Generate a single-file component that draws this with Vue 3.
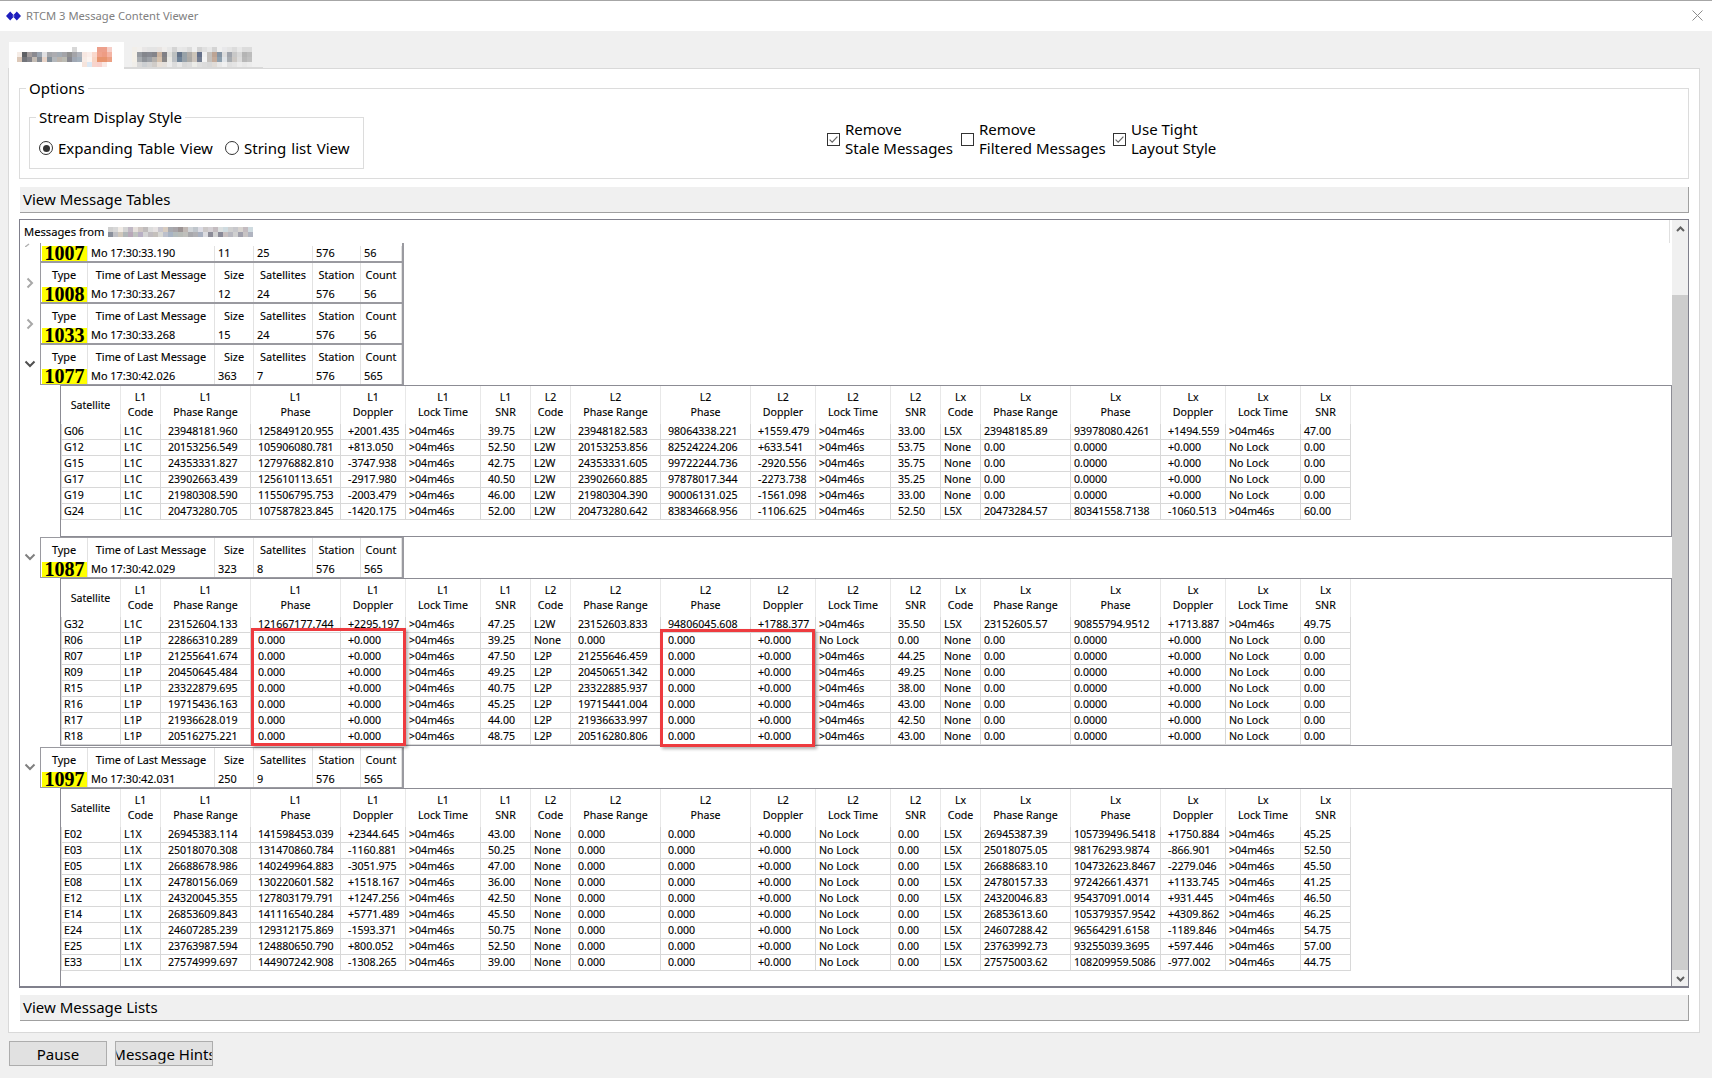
<script setup>
const split = (s) => s.split(' ').map((v) => v.replace('_', ' '))
const NL = 'No_Lock', T = '>04m46s'

const cols = [
  ['Satellite'], ['L1', 'Code'], ['L1', 'Phase Range'], ['L1', 'Phase'], ['L1', 'Doppler'], ['L1', 'Lock Time'], ['L1', 'SNR'],
  ['L2', 'Code'], ['L2', 'Phase Range'], ['L2', 'Phase'], ['L2', 'Doppler'], ['L2', 'Lock Time'], ['L2', 'SNR'],
  ['Lx', 'Code'], ['Lx', 'Phase Range'], ['Lx', 'Phase'], ['Lx', 'Doppler'], ['Lx', 'Lock Time'], ['Lx', 'SNR'],
]
// columns whose values carry the wider left inset
const wide = new Set([2, 3, 4, 6, 8, 9, 10, 12, 16])
const noLx = `None 0.00 0.0000 +0.000 ${NL} 0.00`
const noL2 = `None 0.000 0.000 +0.000 ${NL} 0.00`

const t1077 = [
  `G06 L1C 23948181.960 125849120.955 +2001.435 ${T} 39.75 L2W 23948182.583 98064338.221 +1559.479 ${T} 33.00 L5X 23948185.89 93978080.4261 +1494.559 ${T} 47.00`,
  `G12 L1C 20153256.549 105906080.781 +813.050 ${T} 52.50 L2W 20153253.856 82524224.206 +633.541 ${T} 53.75 ${noLx}`,
  `G15 L1C 24353331.827 127976882.810 -3747.938 ${T} 42.75 L2W 24353331.605 99722244.736 -2920.556 ${T} 35.75 ${noLx}`,
  `G17 L1C 23902663.439 125610113.651 -2917.980 ${T} 40.50 L2W 23902660.885 97878017.344 -2273.738 ${T} 35.25 ${noLx}`,
  `G19 L1C 21980308.590 115506795.753 -2003.479 ${T} 46.00 L2W 21980304.390 90006131.025 -1561.098 ${T} 33.00 ${noLx}`,
  `G24 L1C 20473280.705 107587823.845 -1420.175 ${T} 52.00 L2W 20473280.642 83834668.956 -1106.625 ${T} 52.50 L5X 20473284.57 80341558.7138 -1060.513 ${T} 60.00`,
]
const glo = (id, pr, snr, l2pr, l2snr) =>
  `${id} L1P ${pr} 0.000 +0.000 ${T} ${snr} L2P ${l2pr} 0.000 +0.000 ${T} ${l2snr} ${noLx}`
const t1087 = [
  `G32 L1C 23152604.133 121667177.744 +2295.197 ${T} 47.25 L2W 23152603.833 94806045.608 +1788.377 ${T} 35.50 L5X 23152605.57 90855794.9512 +1713.887 ${T} 49.75`,
  `R06 L1P 22866310.289 0.000 +0.000 ${T} 39.25 ${noL2} ${noLx}`,
  glo('R07', '21255641.674', '47.50', '21255646.459', '44.25'),
  glo('R09', '20450645.484', '49.25', '20450651.342', '49.25'),
  glo('R15', '23322879.695', '40.75', '23322885.937', '38.00'),
  glo('R16', '19715436.163', '45.25', '19715441.004', '43.00'),
  glo('R17', '21936628.019', '44.00', '21936633.997', '42.50'),
  glo('R18', '20516275.221', '48.75', '20516280.806', '43.00'),
]
const gal = (id, pr, ph, d, snr, xpr, xph, xd, xsnr) =>
  `${id} L1X ${pr} ${ph} ${d} ${T} ${snr} ${noL2} L5X ${xpr} ${xph} ${xd} ${T} ${xsnr}`
const t1097 = [
  gal('E02', '26945383.114', '141598453.039', '+2344.645', '43.00', '26945387.39', '105739496.5418', '+1750.884', '45.25'),
  gal('E03', '25018070.308', '131470860.784', '-1160.881', '50.25', '25018075.05', '98176293.9874', '-866.901', '52.50'),
  gal('E05', '26688678.986', '140249964.883', '-3051.975', '47.00', '26688683.10', '104732623.8467', '-2279.046', '45.50'),
  gal('E08', '24780156.069', '130220601.582', '+1518.167', '36.00', '24780157.33', '97242661.4371', '+1133.745', '41.25'),
  gal('E12', '24320045.355', '127803179.791', '+1247.256', '42.50', '24320046.83', '95437091.0014', '+931.445', '46.50'),
  gal('E14', '26853609.843', '141116540.284', '+5771.489', '45.50', '26853613.60', '105379357.9542', '+4309.862', '46.25'),
  gal('E24', '24607285.239', '129312175.869', '-1593.371', '50.75', '24607288.42', '96564291.6158', '-1189.846', '54.75'),
  gal('E25', '23763987.594', '124880650.790', '+800.052', '52.50', '23763992.73', '93255039.3695', '+597.446', '57.00'),
  gal('E33', '27574999.697', '144907242.908', '-1308.265', '39.00', '27575003.62', '108209959.5086', '-977.002', '44.75'),
]

const heads = ['Type', 'Time of Last Message', 'Size', 'Satellites', 'Station', 'Count']
const messages = [
  { id: '1008', time: 'Mo 17:30:33.267', size: 12, sats: 24, st: 576, count: 56, open: false },
  { id: '1033', time: 'Mo 17:30:33.268', size: 15, sats: 24, st: 576, count: 56, open: false },
  { id: '1077', time: 'Mo 17:30:42.026', size: 363, sats: 7, st: 576, count: 565, open: true, dark: true, rows: t1077.map(split), cls: 'pad' },
  { id: '1087', time: 'Mo 17:30:42.029', size: 323, sats: 8, st: 576, count: 565, open: true, rows: t1087.map(split), cls: 'tight', marks: true },
  { id: '1097', time: 'Mo 17:30:42.031', size: 250, sats: 9, st: 576, count: 565, open: true, rows: t1097.map(split), cls: 'pad' },
]

const m = (s) => s.trim().split(/\s+/).map((c) => (c === '-' ? 'transparent' : '#' + c))
const mosaicA = [
  m('- - - - - - - - - - - d8d8d8 - - - - eda08c eda08c f6cfc8'),
  m('f5ece6 5e6064 a39c9c 8a8a90 9aa4b0 e0e0e2 a4a6aa acacb0 a4acb4 a4a4a8 909090 a4a4a8 b0b4bc f8e8e2 fbeeea fad8cc f0a28c ee9c84 f4b4a4'),
  m('dcc8b8 72747a 84848a c4bcb4 868c94 e8d4c8 84909a b4b8bc bcb4ac bcbcb4 888890 a0a8b4 a4b0bc f8ecE6 fdf4f0 f8d4c4 e8946e e8946e eca084'),
  m('- - - - - - - - - - - - - f6e4dc dce8f4 f8d4cc f8d0cc fae8e4 -'),
]
const mosaicB = [
  m('f2efea f2f0ee e8e6e6 e4e4e4 e4e4e4 e8e4e2 f0eeec e8e8e8 d4d4d4 e8e8e8 e6e6e6 dcdcdc f0f0f0 d4d4d4 e0e0e0 e8e8e8 d4d4d4 f0f0f0 e8e8ea e4e4e4 dcdcdc e8e8e8 dcdcdc dcdcdc'),
  m('f4f0e8 969aa0 84868c 888a92 84848a ccb4a0 808086 e0e0dc bcc0c0 64748a 98a2a8 b0aca8 ccc4b8 64708a f0f0f0 c4c0bc bca494 8494a4 dcdcdc a0a4ac c8c8c8 d8d8d8 b4b4b4 bcbcbc'),
  m('f4f0e8 a8acb0 90949a 9ca0a6 b4b0ac d4c0ac 888686 e8e8e4 bcc0c4 708498 98a2aa acaaa6 ccc4bc 747e90 f4f4f4 c4c0bc c4ac9c 8ea0ae e0e4e8 a8acb0 ccc8c4 dcdcdc b8b8b8 c0c0c0'),
  m('f0eeea d8d8d8 cccfd2 d4d4d4 d0ccc8 e8e0d8 e4e0dc ececec dcdcdc e8e8e8 d8d8d8 dcdcdc ecece8 e0e0e0 dcdcdc d8d8d8 e0dcd8 e8e8e8 f0f0f0 e0e0e0 e4e4e4 ececec e8e8e8 ececec'),
]
const mosaicC = [
  m('d0d0d0 d8d8d8 f0ebe6 d4d4d4 c0b8c4 e6e0dc d0c8c4 c0bcbc dcdcdc e6e2e2 c8c6ce d8ccc0 a8aab0 a8a4a8 9c9494 c0b8b4 d0d4d8 c0c6cc dcdce4 ccc8c8 d4d0d4 c4bcc0 dce0e0 cfdbe0 d0d0d0 c8c8cc d8d4d0 c4bcc0 cfdbe0'),
  m('8a909c c0c0c4 d0c8bc b0b6b8 b8a8b8 c0c4c0 b8b0c4 d4d4d4 c0bcc0 c4c0bc d8d8d4 bcc0cc a8b4c4 b4bcbc b8bcb8 c0c0bc a8a8ac b0b0b4 a8b0c0 dcdce0 8c8c98 d0d0d0 8a8a98 c8c0c0 b8b8c0 d0d0d0 a0a0ac c8c4c4 b0b4c0'),
]
</script>

<template>
  <div class="window">
    <header class="titlebar">
      <svg class="logo" width="15" height="10" viewBox="0 0 15 10">
        <path d="M0 5 4.2 .5 7.5 4 10.8 .5 15 5 10.8 9.5 7.5 6 4.2 9.5Z" fill="#1e1ebe" />
        <circle cx="7.5" cy="5" r="1" fill="#9090e0" />
      </svg>
      <span class="title">RTCM 3 Message Content Viewer</span>
      <svg class="close" width="11" height="11" viewBox="0 0 11 11">
        <path d="M.5.5 10.5 10.5M10.5.5.5 10.5" stroke="#8c8c8c" fill="none" />
      </svg>
    </header>

    <nav class="tabs">
      <div class="tab active">
        <div class="mosaic mosaic-a">
          <div v-for="(row, r) in mosaicA" :key="r" class="mrow">
            <i v-for="(c, i) in row" :key="i" :style="{ background: c }"></i>
          </div>
        </div>
      </div>
      <div class="tab inactive">
        <div class="mosaic mosaic-b">
          <div v-for="(row, r) in mosaicB" :key="r" class="mrow">
            <i v-for="(c, i) in row" :key="i" :style="{ background: c }"></i>
          </div>
        </div>
      </div>
    </nav>

    <main class="pane">
      <section class="group options">
        <span class="legend">Options</span>
        <div class="group stream">
          <span class="legend">Stream Display Style</span>
          <div class="radio-row">
            <span class="radio on"></span><span class="radio-label first">Expanding Table View</span>
            <span class="radio"></span><span class="radio-label">String list View</span>
          </div>
        </div>
        <label class="check c1">
          <svg class="box" width="13" height="13" viewBox="0 0 13 13">
            <rect x=".5" y=".5" width="12" height="12" fill="#fff" stroke="#333" />
            <path d="M2.6 6.6 5.2 9.2 10.4 3.6" fill="none" stroke="#666" stroke-width="1.2" />
          </svg>
          <span>Remove<br />Stale Messages</span>
        </label>
        <label class="check c2">
          <svg class="box" width="13" height="13" viewBox="0 0 13 13">
            <rect x=".5" y=".5" width="12" height="12" fill="#fff" stroke="#333" />
          </svg>
          <span>Remove<br />Filtered Messages</span>
        </label>
        <label class="check">
          <svg class="box" width="13" height="13" viewBox="0 0 13 13">
            <rect x=".5" y=".5" width="12" height="12" fill="#fff" stroke="#333" />
            <path d="M2.6 6.6 5.2 9.2 10.4 3.6" fill="none" stroke="#666" stroke-width="1.2" />
          </svg>
          <span>Use Tight<br />Layout Style</span>
        </label>
      </section>

      <div class="bar first-bar">View Message Tables</div>

      <section class="viewport">
        <div class="content">
          <div class="from">
            <span class="from-label">Messages from</span>
            <div class="mosaic mosaic-c">
              <div v-for="(row, r) in mosaicC" :key="r" class="mrow">
                <i v-for="(c, i) in row" :key="i" :style="{ background: c }"></i>
              </div>
            </div>
          </div>

          <div class="msg partial">
            <div class="gutter top">
              <svg width="6" height="4" viewBox="0 0 6 4"><path d="M0 4 4 1" stroke="#b0b0b0" stroke-width="1.4" /></svg>
            </div>
            <div class="sum clipped">
              <div class="id cell"><b>1007</b></div>
              <div class="cell">Mo 17:30:33.190</div>
              <div class="cell">11</div>
              <div class="cell">25</div>
              <div class="cell">576</div>
              <div class="cell">56</div>
            </div>
          </div>

          <template v-for="msg in messages" :key="msg.id">
            <div class="msg">
              <div class="gutter">
                <svg v-if="!msg.open" width="8" height="12" viewBox="0 0 8 12">
                  <path d="M1.5 1.5 6 6 1.5 10.5" fill="none" stroke="#a8a8a8" stroke-width="2" />
                </svg>
                <svg v-else class="down-chev" width="12" height="8" viewBox="0 0 12 8">
                  <path d="M1.5 1.5 6 6 10.5 1.5" fill="none" :stroke="msg.dark ? '#505050' : '#808080'" stroke-width="2" />
                </svg>
              </div>
              <div class="sum">
                <div v-for="h in heads" :key="h" class="head">{{ h }}</div>
                <div class="id cell"><b>{{ msg.id }}</b></div>
                <div class="cell">{{ msg.time }}</div>
                <div class="cell">{{ msg.size }}</div>
                <div class="cell">{{ msg.sats }}</div>
                <div class="cell">{{ msg.st }}</div>
                <div class="cell">{{ msg.count }}</div>
              </div>
            </div>
            <div v-if="msg.open" class="detail" :class="msg.cls">
              <div class="grid">
                <div v-for="(c, i) in cols" :key="i" class="th"><span v-for="l in c" :key="l">{{ l }}</span></div>
                <template v-for="row in msg.rows" :key="row[0]">
                  <div v-for="(v, i) in row" :key="i" class="td" :class="{ wide: wide.has(i), firstcol: i === 0 }">{{ v }}</div>
                </template>
              </div>
              <template v-if="msg.marks">
                <div class="mark m1"></div>
                <div class="mark m2"></div>
              </template>
            </div>
          </template>
        </div>
        <aside class="scrollbar">
          <svg class="arrow" width="9" height="6" viewBox="0 0 9 6"><path d="M1 5 4.5 1.5 8 5" fill="none" stroke="#606060" stroke-width="2" /></svg>
          <div class="thumb"></div>
          <svg class="arrow down" width="9" height="6" viewBox="0 0 9 6"><path d="M1 1 4.5 4.5 8 1" fill="none" stroke="#606060" stroke-width="2" /></svg>
        </aside>
      </section>

      <div class="bar last-bar">View Message Lists</div>
    </main>

    <footer class="actions">
      <button class="btn">Pause</button>
      <button class="btn clip"><span>Message Hints</span></button>
    </footer>
  </div>
</template>

<style>
html, body { margin: 0; background: #f0f0f0; }
</style>

<style scoped>
* { box-sizing: border-box; }
.window {
  width: 1712px;
  height: 1078px;
  background: #f0f0f0;
  font-family: "Noto Sans", "Liberation Sans", sans-serif;
  color: #000;
  overflow: hidden;
}
.titlebar {
  height: 31px;
  background: #fff;
  border-top: 1px solid #a6a6a6;
  display: flex;
  align-items: center;
  padding: 0 9px 1px 6px;
}
.logo { margin-right: 5px; }
.title { font-size: 11.2px; color: #808080; flex: 1; }
.tabs { display: flex; height: 37px; padding: 11px 0 0 9px; }
.tab { height: 26px; position: relative; }
.tab.active { width: 115px; background: #fff; z-index: 1; height: 27px; }
.tab.inactive { width: 139px; background: #f0f0f0; border-bottom: 1px solid #d9d9d9; margin-top: 1px; height: 25px; }
.mosaic { position: absolute; display: flex; flex-direction: column; }
.mrow { display: flex; height: 5px; }
.mrow i { display: block; width: 5px; height: 5px; flex: none; }
.mosaic-a { left: 8px; top: 5px; }
.mosaic-b { left: 8px; top: 4px; }
.mosaic-c { position: static; }

.pane {
  margin-left: 8px;
  width: 1692px;
  height: 965px;
  background: #fff;
  border: 1px solid #d9d9d9;
  padding: 19px 0 0 10px;
}
.group { position: relative; border: 1px solid #dcdcdc; }
.legend {
  position: absolute;
  top: -12px;
  left: 6px;
  padding: 0 3px;
  background: #fff;
  font-size: 15px;
  line-height: 22px;
}
.options {
  width: 1670px;
  height: 91px;
  display: flex;
  align-items: flex-start;
  padding: 28px 0 0 9px;
}
.stream { width: 335px; height: 52px; }
.radio-row { display: flex; align-items: center; height: 22px; margin-top: 19px; padding-left: 9px; font-size: 15px; }
.radio { width: 14px; height: 14px; border: 1px solid #333; border-radius: 50%; background: #fff; position: relative; flex: none; }
.radio.on::after { content: ""; position: absolute; inset: 2.5px; border-radius: 50%; background: #333; }
.radio-label { margin-left: 5px; white-space: nowrap; word-spacing: 1.2px; }
.radio-label.first { width: 167px; }
.check { display: flex; align-items: center; width: 134px; font-size: 15px; line-height: 19px; margin-top: 3px; white-space: nowrap; }
.c1 { margin-left: 463px; }
.c2 { width: 152px; }
.box { margin-right: 5px; flex: none; }

.bar {
  height: 26px;
  margin-left: 1px;
  width: 1669px;
  background: #f0f0f0;
  border-right: 1px solid #a0a0a0;
  border-bottom: 1px solid #a0a0a0;
  padding-left: 3px;
  font-size: 15px;
  line-height: 25px;
}
.first-bar { margin-top: 8px; }
.last-bar { margin-top: 7px; }

.viewport {
  margin-top: 6px;
  width: 1670px;
  height: 769px;
  display: flex;
  border: 1px solid #80808c;
  border-bottom-width: 2px;
  overflow: hidden;
}
.content {
  width: 1652px;
  flex: none;
  overflow: hidden;
  font-size: 10.6px;
  -webkit-text-stroke: 0.12px #000;
}
.from {
  height: 23px;
  display: flex;
  align-items: center;
  padding-left: 4px;
  font-size: 11.2px;
  border-right: 1px solid #e0e0e0;
  margin-right: 2px;
}
.from-label { width: 84px; flex: none; white-space: nowrap; }
.msg { display: flex; align-items: stretch; }
.gutter { width: 20px; flex: none; display: flex; align-items: center; justify-content: center; }
.gutter.top { align-items: flex-start; padding-right: 4px; }
.down-chev { margin-bottom: 2px; }
.sum {
  width: 364px;
  height: 41px;
  display: grid;
  grid-template-columns: 47px 127px 39px 59px 48px 41px;
  grid-template-rows: 24px 15px;
  border: 1px solid #9a9aa0;
  border-right-width: 2px;
  background: #fff;
  font-size: 10.9px;
}
.clipped { height: 19px; grid-template-rows: 15px; border-top: 0; padding-top: 3px; }
.head, .cell { border-right: 1px solid #e2e2e2; white-space: nowrap; line-height: 13px; }
.head { text-align: center; line-height: 24px; }
.cell { padding-left: 3px; }
.id { background: #ff0; margin-left: 1px; padding: 0; text-align: center; font-family: "Liberation Serif", serif; font-size: 20px; line-height: 15px; }

.detail {
  position: relative;
  margin-left: 40px;
  border: 1px solid #8c8c94;
}
.detail.pad { padding-bottom: 16px; }
.detail.tight { margin-bottom: 1px; }
.grid {
  display: grid;
  grid-template-columns: 60px 40px 90px 90px 65px 75px 50px 40px 90px 90px 65px 75px 50px 40px 90px 90px 65px 75px 50px;
  grid-auto-rows: 16px;
  grid-template-rows: 38px;
  width: 1291px;
}
.th {
  display: flex;
  flex-direction: column;
  justify-content: flex-start;
  align-items: center;
  padding-top: 4px;
  line-height: 15px;
  border-right: 1px solid #e8e8e8;
  white-space: nowrap;
}
.th:first-child { justify-content: center; padding-top: 0; }
.td {
  line-height: 15px;
  padding-left: 3px;
  border-right: 1px solid #d8d8d8;
  border-bottom: 1px solid #d8d8d8;
  white-space: nowrap;
  overflow: hidden;
}
.td.firstcol { border-left: 1px solid #d8d8d8; padding-left: 2px; }
.td.wide { padding-left: 7px; }
.mark {
  position: absolute;
  border: 3px solid #ee3b3f;
  box-shadow: 2px 2px 3px rgba(0, 0, 0, 0.3);
}
.m1 { left: 190px; top: 49px; width: 155px; height: 118px; }
.m2 { left: 599px; top: 50px; width: 155px; height: 118px; }

.scrollbar {
  width: 16px;
  flex: none;
  background: #f0f0f0;
  display: flex;
  flex-direction: column;
  align-items: center;
}
.arrow { margin-top: 6px; flex: none; }
.thumb { width: 100%; margin-top: 63px; height: 675px; background: #cdcdcd; flex: none; }
.arrow.down { margin-top: 6px; }

.actions { display: flex; gap: 8px; padding: 8px 0 0 9px; }
.btn {
  width: 98px;
  height: 25px;
  padding: 0;
  background: #e1e1e1;
  border: 1px solid #adadad;
  border-radius: 0;
  font-family: inherit;
  font-size: 15px;
  color: #000;
  overflow: hidden;
  display: flex;
  align-items: center;
  justify-content: center;
  white-space: nowrap;
}
.btn.clip span { flex: none; clip-path: inset(0 4px); }
</style>
